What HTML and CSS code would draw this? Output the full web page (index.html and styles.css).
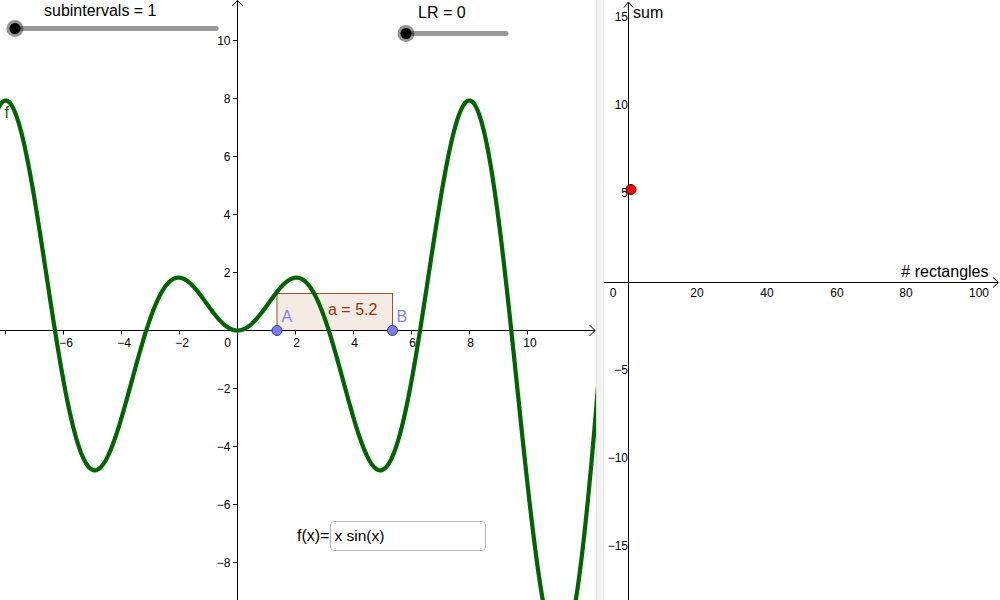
FILE: index.html
```html
<!DOCTYPE html>
<html lang="en">
<head>
<meta charset="utf-8">
<title>Riemann sums</title>
<link rel="stylesheet" href="styles.css">
</head>
<body>
<div class="app">
  <div class="view view-left">
    <svg class="graph" width="596" height="600" viewBox="0 0 596 600">
      <rect class="rect-a" x="277" y="293.5" width="115.5" height="37"/>
      <g class="axes">
        <line class="axis-line" x1="0" y1="330.5" x2="595" y2="330.5"/>
        <polyline class="axis-line" points="589.5,325 595,330.5 589.5,336"/>
        <line class="axis-line" x1="237.5" y1="0.5" x2="237.5" y2="600"/>
        <polyline class="axis-line" points="232,6 237.5,0.5 243,6"/>
        <line class="axis-line" x1="5.5" y1="330.5" x2="5.5" y2="334.5"/>
        <line class="axis-line" x1="63.5" y1="330.5" x2="63.5" y2="334.5"/>
        <line class="axis-line" x1="121.5" y1="330.5" x2="121.5" y2="334.5"/>
        <line class="axis-line" x1="179.5" y1="330.5" x2="179.5" y2="334.5"/>
        <line class="axis-line" x1="295.5" y1="330.5" x2="295.5" y2="334.5"/>
        <line class="axis-line" x1="353.5" y1="330.5" x2="353.5" y2="334.5"/>
        <line class="axis-line" x1="411.5" y1="330.5" x2="411.5" y2="334.5"/>
        <line class="axis-line" x1="469.5" y1="330.5" x2="469.5" y2="334.5"/>
        <line class="axis-line" x1="527.5" y1="330.5" x2="527.5" y2="334.5"/>
        <line class="axis-line" x1="233" y1="40.5" x2="237.5" y2="40.5"/>
        <line class="axis-line" x1="233" y1="98.5" x2="237.5" y2="98.5"/>
        <line class="axis-line" x1="233" y1="156.5" x2="237.5" y2="156.5"/>
        <line class="axis-line" x1="233" y1="214.5" x2="237.5" y2="214.5"/>
        <line class="axis-line" x1="233" y1="272.5" x2="237.5" y2="272.5"/>
        <line class="axis-line" x1="233" y1="388.5" x2="237.5" y2="388.5"/>
        <line class="axis-line" x1="233" y1="446.5" x2="237.5" y2="446.5"/>
        <line class="axis-line" x1="233" y1="504.5" x2="237.5" y2="504.5"/>
        <line class="axis-line" x1="233" y1="562.5" x2="237.5" y2="562.5"/>
      </g>
      <g class="tick-labels">
        <text class="lbl-mid" x="66" y="347">−6</text>
        <text class="lbl-mid" x="124" y="347">−4</text>
        <text class="lbl-mid" x="182" y="347">−2</text>
        <text class="lbl-end" x="231" y="347">0</text>
        <text class="lbl-mid" x="296.5" y="347">2</text>
        <text class="lbl-mid" x="354.5" y="347">4</text>
        <text class="lbl-mid" x="412.5" y="347">6</text>
        <text class="lbl-mid" x="470.5" y="347">8</text>
        <text class="lbl-mid" x="530" y="347">10</text>
        <text class="lbl-end" x="230.5" y="45">10</text>
        <text class="lbl-end" x="230.5" y="103">8</text>
        <text class="lbl-end" x="230.5" y="161">6</text>
        <text class="lbl-end" x="230.5" y="219">4</text>
        <text class="lbl-end" x="230.5" y="277">2</text>
        <text class="lbl-end" x="230.5" y="393">−2</text>
        <text class="lbl-end" x="230.5" y="451">−4</text>
        <text class="lbl-end" x="230.5" y="509">−6</text>
        <text class="lbl-end" x="230.5" y="567">−8</text>
      </g>
      <path id="curve" class="curve" d=""/>
      <text class="fn-label" x="4.5" y="118">f</text>
      <circle class="pt-blue" cx="277" cy="330.5" r="5"/>
      <circle class="pt-blue" cx="392.5" cy="330.5" r="5"/>
      <text class="pt-label" x="281.5" y="322">A</text>
      <text class="pt-label" x="396.5" y="322">B</text>
      <text class="a-label" x="328" y="315">a = 5.2</text>

      <line class="slider-track" x1="15" y1="28.5" x2="216" y2="28.5"/>
      <circle class="knob-halo" cx="15" cy="28.5" r="8.5"/>
      <circle class="knob" cx="15" cy="28.5" r="5.5"/>
      <text class="slider-label" x="44" y="16">subintervals = 1</text>

      <line class="slider-track" x1="406" y1="33.5" x2="506" y2="33.5"/>
      <circle class="knob-halo" cx="406" cy="33.5" r="8.5"/>
      <circle class="knob" cx="406" cy="33.5" r="5.5"/>
      <text class="slider-label" x="418" y="18">LR = 0</text>
    </svg>
    <div class="input-row">
      <span class="input-caption">f(x)=</span>
      <div class="input-box">x sin(x)</div>
    </div>
  </div>
  <div class="divider"></div>
  <div class="view view-right">
    <svg class="graph" width="396" height="600" viewBox="604 0 396 600">
      <line class="axis-line" x1="604" y1="282.5" x2="998" y2="282.5"/>
      <polyline class="axis-line" points="993,277.5 998.5,282.5 993,287.5"/>
      <line class="axis-line" x1="628.5" y1="2" x2="628.5" y2="600"/>
      <polyline class="axis-line" points="624,7.5 628.5,2 633,7.5"/>
      <text class="axis-title" x="633" y="18">sum</text>
      <text class="axis-title end" x="988.5" y="277">#&#160;rectangles</text>
      <g class="tick-labels">
        <text class="lbl-mid" x="613" y="297">0</text>
        <text class="lbl-mid" x="697" y="297">20</text>
        <text class="lbl-mid" x="767" y="297">40</text>
        <text class="lbl-mid" x="837" y="297">60</text>
        <text class="lbl-mid" x="906" y="297">80</text>
        <text class="lbl-mid" x="979" y="297">100</text>
        <text class="lbl-end" x="628" y="21">15</text>
        <text class="lbl-end" x="628" y="109">10</text>
        <text class="lbl-end" x="628" y="197">5</text>
        <text class="lbl-end" x="628" y="374">−5</text>
        <text class="lbl-end" x="628" y="462">−10</text>
        <text class="lbl-end" x="628" y="550">−15</text>
      </g>
      <circle class="pt-red" cx="631" cy="189.5" r="5"/>
    </svg>
  </div>
</div>
<script src="script.js"></script>
</body>
</html>
```

FILE: styles.css
```css
html, body {
  margin: 0;
  padding: 0;
  background: #ffffff;
}
body {
  font-family: "Liberation Sans", Arial, sans-serif;
  overflow: hidden;
}
.app {
  display: flex;
  width: 1000px;
  height: 600px;
}
.view {
  position: relative;
  height: 600px;
  overflow: hidden;
  background: #ffffff;
}
.view-left {
  width: 596px;
  flex: none;
}
.divider {
  width: 8px;
  flex: none;
  box-sizing: border-box;
  background: #f4f4f4;
  border-left: 1px solid #dcdcdc;
  border-right: 1px solid #e9e9e9;
}
.view-right {
  width: 396px;
  flex: none;
}
.graph {
  display: block;
}
.axis-line {
  stroke: #000000;
  stroke-width: 1;
  fill: none;
}
.tick-labels text {
  font-family: "Liberation Sans", Arial, sans-serif;
  font-size: 12px;
  fill: #000000;
}
.lbl-mid {
  text-anchor: middle;
}
.lbl-end {
  text-anchor: end;
}
.rect-a {
  fill: #f5ebe5;
  stroke: #a0502a;
  stroke-width: 1;
}
.curve {
  fill: none;
  stroke: #006400;
  stroke-width: 4.2;
  stroke-linejoin: round;
  stroke-linecap: round;
}
.fn-label {
  font-family: "Liberation Sans", Arial, sans-serif;
  font-size: 16px;
  fill: #006400;
}
.pt-blue {
  fill: #7a7aff;
  stroke: #3a3a5a;
  stroke-width: 1;
}
.pt-label {
  font-family: "Liberation Sans", Arial, sans-serif;
  font-size: 16px;
  fill: #8080ff;
}
.a-label {
  font-family: "Liberation Sans", Arial, sans-serif;
  font-size: 16px;
  fill: #993300;
}
.slider-track {
  stroke: #999999;
  stroke-width: 5;
  stroke-linecap: round;
}
.knob-halo {
  fill: rgba(0, 0, 0, 0.42);
}
.knob {
  fill: #000000;
}
.slider-label {
  font-family: "Liberation Sans", Arial, sans-serif;
  font-size: 16px;
  fill: #000000;
}
.axis-title {
  font-family: "Liberation Sans", Arial, sans-serif;
  font-size: 16px;
  fill: #000000;
}
.axis-title.end {
  text-anchor: end;
}
.pt-red {
  fill: #ff0000;
  stroke: #3a0000;
  stroke-width: 1;
}
.input-row {
  position: absolute;
  left: 297px;
  top: 521px;
  display: flex;
  align-items: center;
  gap: 1px;
  height: 30px;
}
.input-caption {
  font-size: 16px;
  color: #000000;
}
.input-box {
  box-sizing: border-box;
  width: 156px;
  height: 30px;
  border: 1px solid #b4b4b4;
  border-radius: 4px;
  padding: 0 0 0 3px;
  font-size: 15.5px;
  line-height: 28px;
  color: #000000;
  background: #ffffff;
}
```

FILE: script.js
```js
(function () {
  var path = document.getElementById('curve');
  if (!path) return;
  var ox = 237.5, oy = 330.5, s = 29.05;
  var d = '';
  for (var px = -4; px <= 600; px += 1) {
    var x = (px - ox) / s;
    var y = oy - x * Math.sin(x) * s;
    if (y > 700) y = 700;
    d += (d === '' ? 'M' : 'L') + px.toFixed(1) + ' ' + y.toFixed(2) + ' ';
  }
  path.setAttribute('d', d);
})();
```
